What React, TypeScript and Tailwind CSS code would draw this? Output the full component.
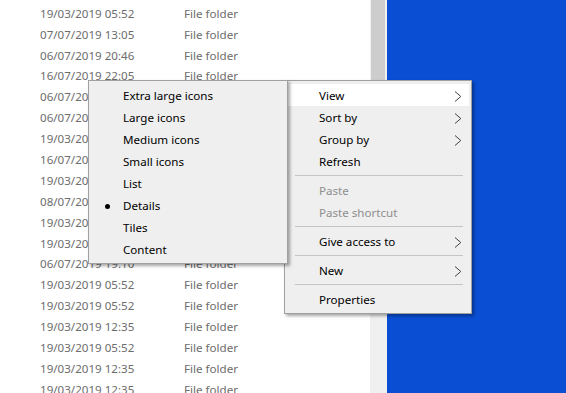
import React from 'react';

const rows: [string, string][] = [
    ['19/03/2019 05:52', 'File folder'],
    ['07/07/2019 13:05', 'File folder'],
    ['06/07/2019 20:46', 'File folder'],
    ['16/07/2019 22:05', 'File folder'],
    ['06/07/2019 20:41', 'File folder'],
    ['06/07/2019 20:39', 'File folder'],
    ['19/03/2019 05:52', 'File folder'],
    ['16/07/2019 21:58', 'File folder'],
    ['19/03/2019 05:52', 'File folder'],
    ['08/07/2019 10:14', 'File folder'],
    ['19/03/2019 12:35', 'File folder'],
    ['19/03/2019 05:52', 'File folder'],
    ['06/07/2019 19:10', 'File folder'],
    ['19/03/2019 05:52', 'File folder'],
    ['19/03/2019 05:52', 'File folder'],
    ['19/03/2019 12:35', 'File folder'],
    ['19/03/2019 05:52', 'File folder'],
    ['19/03/2019 12:35', 'File folder'],
    ['19/03/2019 12:35', 'File folder'],
];

const viewItems = ['Extra large icons', 'Large icons', 'Medium icons', 'Small icons', 'List', 'Details', 'Tiles', 'Content'];

type MenuEntry =
    | { kind: 'item'; label: string; sub?: boolean; disabled?: boolean; active?: boolean }
    | { kind: 'sep' };

const mainItems: MenuEntry[] = [
    { kind: 'item', label: 'View', sub: true, active: true },
    { kind: 'item', label: 'Sort by', sub: true },
    { kind: 'item', label: 'Group by', sub: true },
    { kind: 'item', label: 'Refresh' },
    { kind: 'sep' },
    { kind: 'item', label: 'Paste', disabled: true },
    { kind: 'item', label: 'Paste shortcut', disabled: true },
    { kind: 'sep' },
    { kind: 'item', label: 'Give access to', sub: true },
    { kind: 'sep' },
    { kind: 'item', label: 'New', sub: true },
    { kind: 'sep' },
    { kind: 'item', label: 'Properties' },
];

const Chevron = () => (
    <svg width="8" height="11" viewBox="0 0 8 11" fill="none">
        <path d="M1 0.5 L6.8 5.5 L1 10.5" stroke="#444444" strokeWidth="1" />
    </svg>
);

const App: React.FC = () => {
    return (
        <div className="relative w-[566px] h-[393px] overflow-hidden flex font-['Segoe_UI','Noto_Sans',sans-serif] text-[11.6px]">
            {/* file list */}
            <div className="w-[370px] h-full bg-white pt-[3px] pl-[40px] text-[#6d6d6d]">
                {rows.map(([date, type], i) => (
                    <div key={i} className="h-[20.9px] flex items-center whitespace-nowrap">
                        <span className="w-[144px]">{date}</span>
                        <span>{type}</span>
                    </div>
                ))}
            </div>

            {/* scrollbar */}
            <div className="w-[17px] h-full bg-[#f0f0f0] pl-[1px] pr-[2px]">
                <div className="h-[160px] bg-[#cdcdcd]" />
            </div>

            {/* desktop */}
            <div className="flex-1 h-full bg-[#0a4ed4]" />

            {/* main context menu */}
            <div className="absolute left-[284px] top-[80px] w-[188px] bg-[#efefef] border border-[#a0a0a0] py-[3px] px-[2px] shadow-[2px_2px_3px_rgba(0,0,0,0.35)] text-black">
                {mainItems.map((m, i) =>
                    m.kind === 'sep' ? (
                        <div key={i} className="h-[7px] flex items-center pl-[8px] pr-[6px]">
                            <div className="h-px w-full bg-[#c4c4c4]" />
                        </div>
                    ) : (
                        <div
                            key={i}
                            className={`h-[22px] pt-[2px] flex items-center pl-[32px] pr-[7px] ${m.active ? 'bg-white' : ''} ${m.disabled ? 'text-[#8e8e8e]' : ''}`}
                        >
                            <span className="flex-1">{m.label}</span>
                            {m.sub && <Chevron />}
                        </div>
                    )
                )}
            </div>

            {/* view submenu */}
            <div className="absolute left-[88px] top-[80px] w-[200px] bg-[#efefef] border border-[#a0a0a0] py-[3px] px-[2px] shadow-[2px_2px_3px_rgba(0,0,0,0.35)] text-black">
                {viewItems.map((label) => (
                    <div key={label} className="h-[22px] pt-[2px] flex items-center">
                        <div className="w-[32px] flex justify-center">
                            {label === 'Details' && <div className="w-[5px] h-[5px] rounded-full bg-black" />}
                        </div>
                        <span>{label}</span>
                    </div>
                ))}
            </div>
        </div>
    );
};

export default App;
